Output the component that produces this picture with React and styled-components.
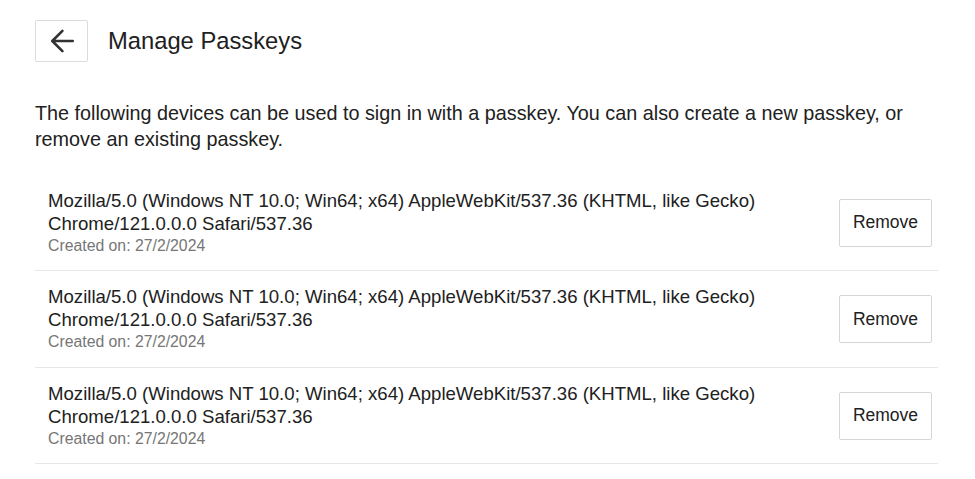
import React from "react";
import styled, { createGlobalStyle } from "styled-components";

const GlobalStyle = createGlobalStyle`
  body {
    margin: 0;
    background: #fff;
    font-family: "Liberation Sans", Arial, sans-serif;
    color: #212121;
  }
`;

const Page = styled.div`
  width: 903px;
  padding: 20px 0 0 35px;
`;

const Header = styled.div`
  display: flex;
  align-items: center;
  gap: 20px;
`;

const BackButton = styled.button`
  width: 53px;
  height: 42px;
  display: flex;
  align-items: center;
  justify-content: center;
  background: #fff;
  border: 1px solid #dcdcdc;
  border-radius: 2px;
  padding: 0;
  color: #333;
`;

const Title = styled.h1`
  margin: 0;
  font-size: 23.75px;
  font-weight: normal;
  color: #212121;
`;

const Lede = styled.p`
  margin: 37.5px 0 0;
  font-size: 19.8px;
  line-height: 26.7px;
  color: #212121;
`;

const List = styled.ul`
  list-style: none;
  margin: 22px 0 0;
  padding: 0;
`;

const Row = styled.li`
  display: flex;
  align-items: center;
  justify-content: space-between;
  padding: 0 6px 0 13px;
  height: 96.5px;
  box-sizing: border-box;
  border-bottom: 1px solid #e6e6e6;
`;

const Device = styled.div`
  display: flex;
  flex-direction: column;
`;

const Agent = styled.div`
  font-size: 18.6px;
  line-height: 23px;
  color: #212121;
`;

const Created = styled.div`
  font-size: 15.8px;
  line-height: 22px;
  color: #767676;
`;

const RemoveButton = styled.button`
  width: 93px;
  height: 48px;
  background: #fff;
  border: 1px solid #d6d6d6;
  border-radius: 2px;
  font-family: inherit;
  font-size: 17.5px;
  color: #212121;
  padding: 0;
`;

const passkeys = [
  { id: 1, browser: "Chrome/121.0.0.0 Safari/537.36", created: "27/2/2024" },
  { id: 2, browser: "Chrome/121.0.0.0 Safari/537.36", created: "27/2/2024" },
  { id: 3, browser: "Chrome/121.0.0.0 Safari/537.36", created: "27/2/2024" },
];

const ArrowLeft = () => (
  <svg width="24" height="24" viewBox="0 0 24 24" fill="none">
    <path
      d="M22.8 12H3M12.4 1.8L2.3 12l10.1 10.2"
      stroke="currentColor"
      strokeWidth="2.6"
      strokeLinecap="round"
      strokeLinejoin="round"
    />
  </svg>
);

export default function App() {
  return (
    <>
      <GlobalStyle />
      <Page>
        <Header>
          <BackButton aria-label="Back">
            <ArrowLeft />
          </BackButton>
          <Title>Manage Passkeys</Title>
        </Header>
        <Lede>
          The following devices can be used to sign in with a passkey. You can
          also create a new passkey, or remove an existing passkey.
        </Lede>
        <List>
          {passkeys.map((item) => (
            <Row key={item.id}>
              <Device>
                <Agent>
                  Mozilla/5.0 (Windows NT 10.0; Win64; x64) AppleWebKit/537.36
                  (KHTML, like Gecko)
                  <br />
                  {item.browser}
                </Agent>
                <Created>Created on: {item.created}</Created>
              </Device>
              <RemoveButton>Remove</RemoveButton>
            </Row>
          ))}
        </List>
      </Page>
    </>
  );
}
